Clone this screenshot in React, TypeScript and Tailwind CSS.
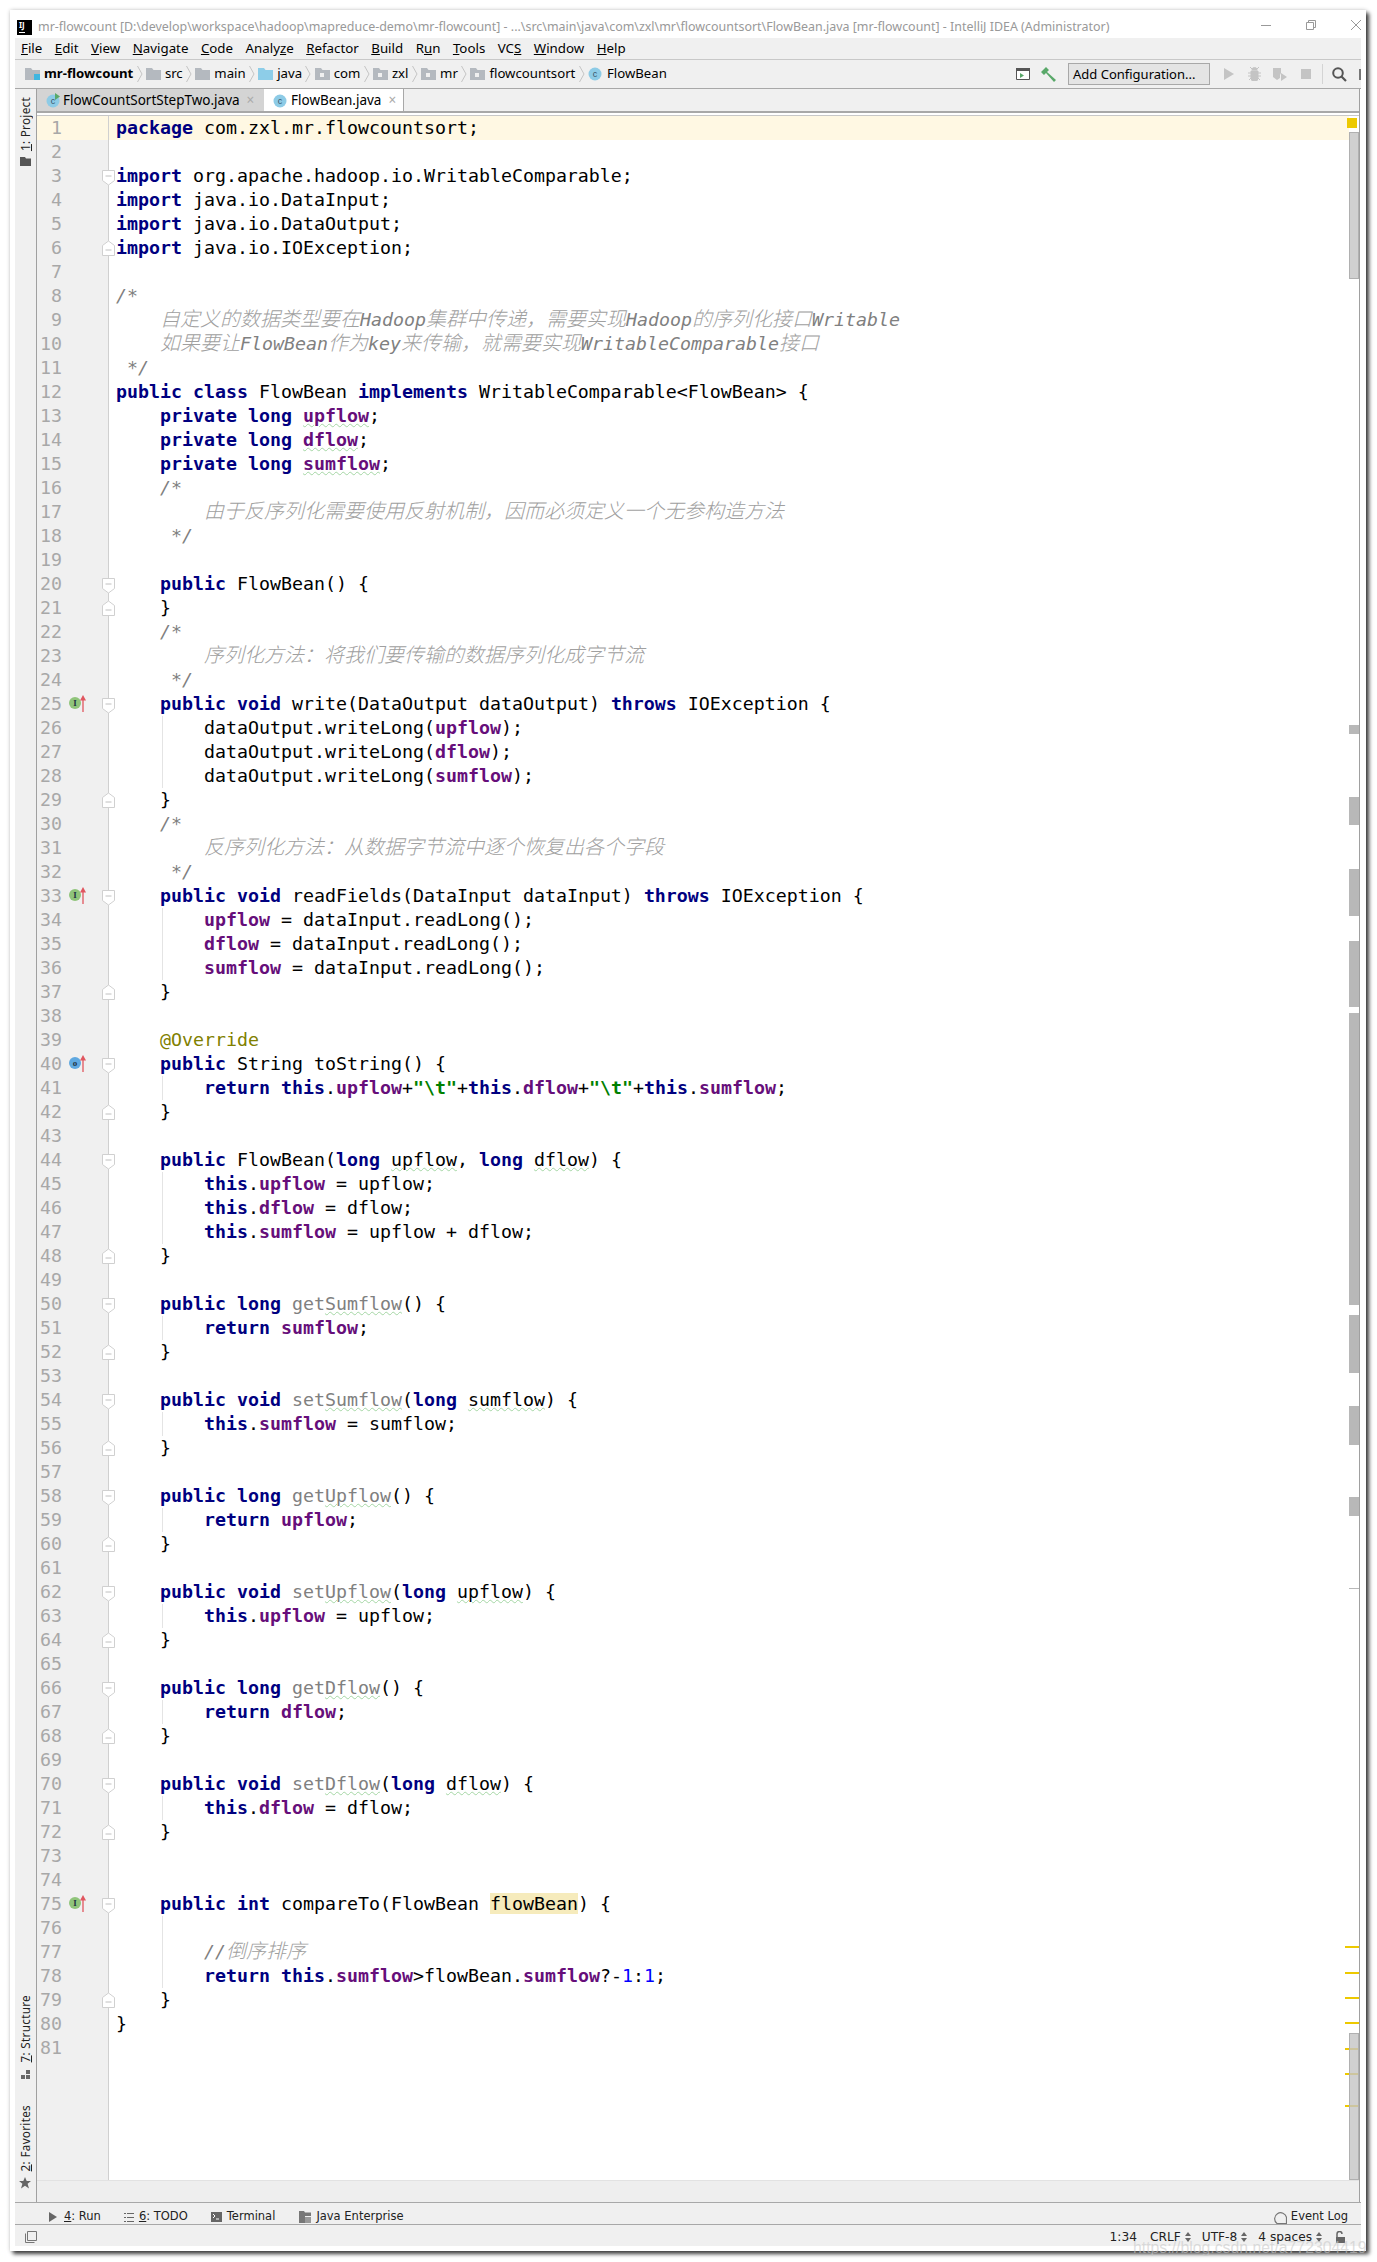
import React from "react";

const CODE: string[] = [
  "{k|package} com.zxl.mr.flowcountsort;",
  "",
  "{k|import} org.apache.hadoop.io.WritableComparable;",
  "{k|import} java.io.DataInput;",
  "{k|import} java.io.DataOutput;",
  "{k|import} java.io.IOException;",
  "",
  "{c|/*}",
  "{c|    }{z|自定义的数据类型要在}{c|Hadoop}{z|集群中传递，需要实现}{c|Hadoop}{z|的序列化接口}{c|Writable}",
  "{c|    }{z|如果要让}{c|FlowBean}{z|作为}{c|key}{z|来传输，就需要实现}{c|WritableComparable}{z|接口}",
  "{c| */}",
  "{k|public class} FlowBean {k|implements} WritableComparable<FlowBean> {",
  "    {k|private long} {F|upflow};",
  "    {k|private long} {F|dflow};",
  "    {k|private long} {F|sumflow};",
  "{c|    /*}",
  "{c|        }{z|由于反序列化需要使用反射机制，因而必须定义一个无参构造方法}",
  "{c|     */}",
  "",
  "    {k|public} FlowBean() {",
  "    }",
  "{c|    /*}",
  "{c|        }{z|序列化方法：将我们要传输的数据序列化成字节流}",
  "{c|     */}",
  "    {k|public void} write(DataOutput dataOutput) {k|throws} IOException {",
  "        dataOutput.writeLong({f|upflow});",
  "        dataOutput.writeLong({f|dflow});",
  "        dataOutput.writeLong({f|sumflow});",
  "    }",
  "{c|    /*}",
  "{c|        }{z|反序列化方法：从数据字节流中逐个恢复出各个字段}",
  "{c|     */}",
  "    {k|public void} readFields(DataInput dataInput) {k|throws} IOException {",
  "        {f|upflow} = dataInput.readLong();",
  "        {f|dflow} = dataInput.readLong();",
  "        {f|sumflow} = dataInput.readLong();",
  "    }",
  "",
  "    {a|@Override}",
  "    {k|public} String toString() {",
  "        {k|return this}.{f|upflow}+{s|\"\\t\"}+{k|this}.{f|dflow}+{s|\"\\t\"}+{k|this}.{f|sumflow};",
  "    }",
  "",
  "    {k|public} FlowBean({k|long} {t|upflow}, {k|long} {t|dflow}) {",
  "        {k|this}.{f|upflow} = upflow;",
  "        {k|this}.{f|dflow} = dflow;",
  "        {k|this}.{f|sumflow} = upflow + dflow;",
  "    }",
  "",
  "    {k|public long} {g|get}{u|Sumflow}() {",
  "        {k|return} {f|sumflow};",
  "    }",
  "",
  "    {k|public void} {g|set}{u|Sumflow}({k|long} {t|sumflow}) {",
  "        {k|this}.{f|sumflow} = sumflow;",
  "    }",
  "",
  "    {k|public long} {g|get}{u|Upflow}() {",
  "        {k|return} {f|upflow};",
  "    }",
  "",
  "    {k|public void} {g|set}{u|Upflow}({k|long} {t|upflow}) {",
  "        {k|this}.{f|upflow} = upflow;",
  "    }",
  "",
  "    {k|public long} {g|get}{u|Dflow}() {",
  "        {k|return} {f|dflow};",
  "    }",
  "",
  "    {k|public void} {g|set}{u|Dflow}({k|long} {t|dflow}) {",
  "        {k|this}.{f|dflow} = dflow;",
  "    }",
  "",
  "",
  "    {k|public int} compareTo(FlowBean {h|flowBean}) {",
  "",
  "{c|        //}{z|倒序排序}",
  "        {k|return this}.{f|sumflow}>flowBean.{f|sumflow}?-{n|1}:{n|1};",
  "    }",
  "}",
  "",
];

const TOKEN: Record<string, string> = {
  k: "font-bold text-[#000080]",
  f: "font-bold text-[#660e7a]",
  F: "font-bold text-[#660e7a] underline decoration-wavy decoration-[#a5d6a5] decoration-1",
  t: "underline decoration-wavy decoration-[#a5d6a5] decoration-1",
  u: "text-[#808080] underline decoration-wavy decoration-[#a5d6a5] decoration-1",
  g: "text-[#808080]",
  c: "italic text-[#808080]",
  z: "italic text-[#a0a0a0] text-[20px] leading-[0] font-['Noto_Sans_CJK_SC',sans-serif] font-light",
  a: "text-[#808000]",
  n: "text-[#0000ff]",
  s: "font-bold text-[#008000]",
  h: "bg-[#f6ebbc]",
};

const FOLD_OPEN = [3, 20, 25, 33, 40, 44, 50, 54, 58, 62, 66, 70, 75];
const FOLD_CLOSE = [6, 21, 29, 37, 42, 48, 52, 56, 60, 64, 68, 72, 79];
const IMPL = [25, 33, 75];
const GUIDE = [26, 27, 28, 34, 35, 36, 41, 45, 46, 47, 51, 55, 59, 63, 67, 71, 76, 77, 78];

// marks on the error stripe, y from top of the editor
const GREY_MARKS = [
  [609, 9], [681, 28], [753, 47], [825, 66], [897, 292], [1199, 58], [1290, 39], [1381, 19], [1472, 1],
];
const YELLOW_MARKS = [1830, 1856, 1881, 1906, 1932, 1957, 1989];

function renderLine(src: string) {
  const parts: React.ReactNode[] = [];
  const re = /\{(\w)\|([^}]*)\}/g;
  let last = 0;
  let m: RegExpExecArray | null;
  while ((m = re.exec(src))) {
    if (m.index > last) parts.push(src.slice(last, m.index));
    parts.push(
      <span key={m.index} className={TOKEN[m[1]]}>
        {m[2]}
      </span>
    );
    last = m.index + m[0].length;
  }
  if (last < src.length) parts.push(src.slice(last));
  return parts;
}

const Folder = ({ color = "#b4b9bf", dot = false, module = false }: { color?: string; dot?: boolean; module?: boolean }) => (
  <svg width="15" height="13" viewBox="0 0 15 13" className="shrink-0">
    <path d="M0 1h6l1.500 2H15v10H0z" fill={color} />
    {dot && <rect x="5" y="6" width="4" height="4" fill="#f0f0f0" />}
    {module && <rect x="9" y="7" width="6" height="6" fill="#40b6e0" />}
  </svg>
);

const ClassIcon = ({ run = false }: { run?: boolean }) => (
  <svg width="15" height="15" viewBox="0 0 15 15" className="shrink-0">
    <circle cx="7" cy="8" r="6.500" fill="#8dcbe6" />
    <text x="7" y="11" textAnchor="middle" fontSize="9" fontFamily="Liberation Sans" fill="#38566a">c</text>
    {run && <path d="M9 0l5 3.500L9 7z" fill="#59a869" />}
  </svg>
);

const Chevron = () => (
  <svg width="6" height="18" viewBox="0 0 6 18" className="shrink-0 mx-[3.3px]">
    <path d="M0.500 1l4.500 8-4.500 8" fill="none" stroke="#c4c4c4" />
  </svg>
);

const FoldMark = ({ open }: { open: boolean }) => (
  <svg
    width="13"
    height="16"
    viewBox="0 0 13 16"
    className={`absolute left-[65px] ${open ? "top-[6px]" : "top-[4px]"}`}
  >
    <path
      d={open ? "M.5.5h12v10l-6 4.500-6-4.500z" : "M.5 15.500h12v-10l-6-4.500-6 4.500z"}
      fill="#fff"
      stroke="#d0d0d0"
    />
    <path d={open ? "M3.500 6h6" : "M3.500 10h6"} stroke="#c0c0c0" />
  </svg>
);

const ImplMark = ({ blue }: { blue: boolean }) => (
  <svg width="19" height="18" viewBox="0 0 19 18" className="absolute left-[32px] top-[2px]">
    <circle cx="6" cy="9" r="6" fill={blue ? "#5fa8e0" : "#8fc47a"} />
    <text x="6" y="12" textAnchor="middle" fontSize="9" fontWeight="bold" fontFamily="Liberation Serif" fill="#234">
      {blue ? "o" : "I"}
    </text>
    <path d="M14 18V3" stroke="#e0565f" strokeWidth="1.300" />
    <path d="M11 6.500L14 1l3 5.500z" fill="#e0565f" />
  </svg>
);

const SideLabel = ({ n, text }: { n: string; text: string }) => (
  <span className="[writing-mode:vertical-rl] rotate-180 text-[11.7px] leading-[21px] tracking-[0.3px]">
    <span className="underline">{n}</span>: {text}
  </span>
);

const NavItem = ({ icon, label, bold }: { icon: React.ReactNode; label: string; bold?: boolean }) => (
  <div className="flex items-center gap-[4px]">
    {icon}
    <span className={bold ? "font-bold" : ""}>{label}</span>
  </div>
);

const MENU: [string, string, string][] = [
  ["", "F", "ile"],
  ["", "E", "dit"],
  ["", "V", "iew"],
  ["", "N", "avigate"],
  ["", "C", "ode"],
  ["Analy", "z", "e"],
  ["", "R", "efactor"],
  ["", "B", "uild"],
  ["R", "u", "n"],
  ["", "T", "ools"],
  ["VC", "S", ""],
  ["", "W", "indow"],
  ["", "H", "elp"],
];

const UpDown = () => (
  <svg width="6" height="10" viewBox="0 0 6 10" className="ml-[4px]">
    <path d="M3 0l3 4H0zM3 10L0 6h6z" fill="#666" />
  </svg>
);

export default function App() {
  return (
    <div className="w-[1377px] h-[2262px] bg-white pl-[10px] pt-[10px] font-['Noto_Sans',sans-serif] text-black overflow-hidden relative">
      <div className="w-[1356px] h-[2241px] bg-white flex flex-col px-[5px] pb-[5px] shadow-[3px_3px_4px_rgba(0,0,0,0.75),0_0_4px_rgba(0,0,0,0.2)]">
        {/* Title bar */}
        <div className="h-[28px] pt-[6px] flex items-center shrink-0">
          <div className="ml-[2px] w-[15px] h-[15px] bg-black relative shrink-0 text-white text-[8px] leading-[9px] font-bold pl-[2px]">
            IJ
            <div className="absolute left-[2px] bottom-[2px] w-[6px] h-[1px] bg-white" />
          </div>
          <span className="ml-[6px] text-[12.45px] text-[#999] whitespace-pre">
            mr-flowcount [D:\develop\workspace\hadoop\mapreduce-demo\mr-flowcount] - ...\src\main\java\com\zxl\mr\flowcountsort\FlowBean.java [mr-flowcount] - IntelliJ IDEA (Administrator)
          </span>
          <div className="ml-auto flex items-center gap-[35px] -mt-[4px]">
            <div className="w-[10px] h-[1px] bg-[#999]" />
            <svg width="10" height="10" viewBox="0 0 10 10">
              <path d="M.5 2.500h7v7h-7zM2.500 2.500v-2h7v7h-2" fill="none" stroke="#999" />
            </svg>
            <svg width="10" height="10" viewBox="0 0 10 10">
              <path d="M0 0l10 10M10 0L0 10" stroke="#999" />
            </svg>
          </div>
        </div>

        {/* Menu */}
        <div className="h-[22px] shrink-0 bg-[#f0f0f0] border-b border-[#c8c8c8] flex items-center pl-[6px] gap-[12.5px] text-[13.3px]">
          {MENU.map(([a, b, c]) => (
            <span key={a + b + c}>
              {a}
              <span className="underline">{b}</span>
              {c}
            </span>
          ))}
        </div>

        {/* Navigation bar */}
        <div className="h-[29px] shrink-0 bg-[#f0f0f0] border-b border-[#a8a8a8] flex items-center pl-[10px] text-[13.2px]">
          <NavItem icon={<Folder module />} label="mr-flowcount" bold />
          <Chevron />
          <NavItem icon={<Folder />} label="src" />
          <Chevron />
          <NavItem icon={<Folder />} label="main" />
          <Chevron />
          <NavItem icon={<Folder color="#8dcde8" />} label="java" />
          <Chevron />
          <NavItem icon={<Folder dot />} label="com" />
          <Chevron />
          <NavItem icon={<Folder dot />} label="zxl" />
          <Chevron />
          <NavItem icon={<Folder dot />} label="mr" />
          <Chevron />
          <NavItem icon={<Folder dot />} label="flowcountsort" />
          <Chevron />
          <NavItem icon={<ClassIcon />} label="FlowBean" />

          <div className="ml-auto flex items-center">
            <svg width="14" height="12" viewBox="0 0 14 12" className="mr-[11px]">
              <path d="M.5.500h13v11H.5z" fill="#fff" stroke="#555" />
              <path d="M0 0h14v3H0z" fill="#555" />
              <path d="M4 5l4 2.500L4 10z" fill="#59a869" />
            </svg>
            <svg width="15" height="15" viewBox="0 0 15 15" className="mr-[12px]">
              <path d="M0 5l5-5 3 3-2 2 9 8-2 2-8-9-2 2z" fill="#59a869" />
            </svg>
            <div className="w-[142px] h-[22px] bg-[#e4e4e4] border border-[#a8a8a8] pl-[4px] text-[13px] leading-[20px]">
              Add Configuration...
            </div>
            <svg width="10" height="12" viewBox="0 0 10 12" className="ml-[14px]">
              <path d="M0 0l10 6-10 6z" fill="#c4c4c4" />
            </svg>
            <svg width="13" height="14" viewBox="0 0 13 14" className="ml-[14px]">
              <path d="M3 4h7v7a3.500 3.500 0 0 1-7 0zM4 3a2.500 2.500 0 0 1 5 0zM0 6h13M0 9h13M1 13l2-2M12 13l-2-2M2 0l2 2M11 0L9 2" fill="#c4c4c4" stroke="#c4c4c4" />
            </svg>
            <svg width="14" height="14" viewBox="0 0 14 14" className="ml-[12px]">
              <path d="M0 1h8v5l-1 2v3l-3 2-4-3z" fill="#c4c4c4" />
              <path d="M8 6l6 4-6 4z" fill="#c4c4c4" />
            </svg>
            <div className="ml-[14px] w-[10px] h-[10px] bg-[#c4c4c4]" />
            <div className="ml-[11px] w-[1px] h-[20px] bg-[#d4d4d4]" />
            <svg width="15" height="15" viewBox="0 0 15 15" className="ml-[9px]">
              <circle cx="6" cy="6" r="4.800" fill="none" stroke="#555" strokeWidth="2" />
              <path d="M9.500 9.500L14 14" stroke="#555" strokeWidth="2.200" />
            </svg>
            <div className="ml-[12px] w-[2px] h-[11px] bg-[#777]" />
          </div>
        </div>

        {/* Middle */}
        <div className="flex-1 min-h-0 flex border-b border-[#a8a8a8]">
          <div className="w-[22px] shrink-0 bg-[#f0f0f0] border-r border-[#a0a0a0] flex flex-col justify-between items-center pt-[8px] pb-[13px] text-[#222]">
            <div className="flex flex-col items-center gap-[6px] -ml-[1px]">
              <SideLabel n="1" text="Project" />
              <svg width="11" height="9" viewBox="0 0 11 9">
                <path d="M0 0h5l1 1.500h5V9H0z" fill="#555" />
              </svg>
            </div>
            <div className="flex flex-col items-center -ml-[1px]">
              <SideLabel n="7" text="Structure" />
              <svg width="9" height="9" viewBox="0 0 9 9" className="mt-[7px] mb-[26px]">
                <path d="M5 0h4v4H5zM0 5h4v4H0zM5 5h4v4H5z" fill="#666" />
              </svg>
              <SideLabel n="2" text="Favorites" />
              <svg width="12" height="12" viewBox="0 0 12 12" className="mt-[6px]">
                <path d="M6 0l1.700 4H12L8.600 6.800 10 11.500 6 8.800 2 11.500l1.400-4.700L0 4h4.300z" fill="#666" />
              </svg>
            </div>
          </div>

          <div className="flex-1 min-w-0 flex flex-col border-r border-[#a0a0a0] mr-[1px]">
            {/* Tabs */}
            <div className="h-[24px] shrink-0 bg-[#f0f0f0] border-b-2 border-[#a8a8a8] flex text-[13.5px]">
              <div className="w-[227px] h-[22px] bg-[#d4d4d4] flex items-center pl-[9px] gap-[2px]">
                <ClassIcon run />
                <span>FlowCountSortStepTwo.java</span>
                <span className="ml-[5px] text-[#aaa]">×</span>
              </div>
              <div className="w-[140px] h-[22px] bg-white border-r border-[#a8a8a8] flex items-center pl-[9px] gap-[3px]">
                <ClassIcon />
                <span>FlowBean.java</span>
                <span className="ml-[4px] text-[#aaa]">×</span>
              </div>
            </div>
            <div className="h-[3px] shrink-0 bg-white border-b border-[#c8c8c8]" />

            {/* Editor */}
            <div className="relative h-[2064px] shrink-0 flex font-['DejaVu_Sans_Mono',monospace] text-[18.27px] leading-[24px]">
              <div className="w-[72px] shrink-0 bg-[#f0f0f0] border-r border-[#d0d0d0] text-[#a8a8a8]">
                {CODE.map((_, i) => (
                  <div key={i} className={`h-[24px] relative ${i === 0 ? "bg-[#fff8e3]" : ""}`}>
                    <div className="w-[25px] text-right">{i + 1}</div>
                    {IMPL.includes(i + 1) && <ImplMark blue={false} />}
                    {i + 1 === 40 && <ImplMark blue />}
                    {FOLD_OPEN.includes(i + 1) && <FoldMark open />}
                    {FOLD_CLOSE.includes(i + 1) && <FoldMark open={false} />}
                  </div>
                ))}
              </div>
              <div className="flex-1 min-w-0 pl-[7px]">
                {CODE.map((src, i) => (
                  <div key={i} className={`h-[24px] whitespace-pre relative -ml-[7px] pl-[7px] ${i === 0 ? "bg-[#fff8e3] mr-[10px]" : ""}`}>
                    {GUIDE.includes(i + 1) && (
                      <div className="absolute left-[53px] top-0 bottom-0 w-[1px] bg-[#e4e4e4]" />
                    )}
                    {renderLine(src)}
                  </div>
                ))}
              </div>

              {/* Error stripe */}
              {GREY_MARKS.map(([top, h]) => (
                <div
                  key={top}
                  className="absolute right-0 w-[10px] bg-[#b8b8b8]"
                  style={{ top, height: h }}
                />
              ))}
              {YELLOW_MARKS.map((top) => (
                <div key={top} className="absolute right-0 w-[14px] h-[2px] bg-[#edc900]" style={{ top }} />
              ))}
              <div className="absolute right-[2px] top-[2px] w-[10px] h-[10px] bg-[#edc900]" />
              <div className="absolute right-0 top-[16px] w-[10px] h-[147px] bg-[#c4c4c4]/80 border border-[#b0b0b0]" />
              <div className="absolute right-0 top-[1917px] w-[10px] h-[147px] bg-[#c4c4c4]/80 border border-[#b0b0b0]" />
            </div>

            <div className="flex-1 bg-[#eeeeee] border-t border-[#e2e2e2]" />
          </div>
        </div>

        {/* Tool buttons */}
        <div className="h-[22px] shrink-0 pt-[7px] bg-[#f0f0f0] border-b border-[#a8a8a8] flex items-center text-[11.5px] text-[#222] font-['DejaVu_Sans',sans-serif] pr-[13px]">
          <svg width="8" height="10" viewBox="0 0 8 10" className="ml-[34px]">
            <path d="M0 0l8 5-8 5z" fill="#666" />
          </svg>
          <span className="ml-[7px]">
            <span className="underline">4</span>: Run
          </span>
          <svg width="10" height="9" viewBox="0 0 10 9" className="ml-[23px]">
            <path d="M0 .5h2M3 .5h7M0 4.500h2M3 4.500h7M0 8.500h2M3 8.500h7" stroke="#666" />
          </svg>
          <span className="ml-[5px]">
            <span className="underline">6</span>: TODO
          </span>
          <svg width="11" height="10" viewBox="0 0 11 10" className="ml-[23px]">
            <path d="M0 0h11v10H0z" fill="#666" />
            <path d="M2 2l2 2-2 2M5 7h3" stroke="#fff" fill="none" />
          </svg>
          <span className="ml-[5px]">Terminal</span>
          <svg width="12" height="12" viewBox="0 0 12 12" className="ml-[24px]">
            <path d="M0 0h5l1 1.500h6V5H6v7H0z" fill="#777" />
            <path d="M6 6h6v6H6z" fill="#999" />
          </svg>
          <span className="ml-[5px]">Java Enterprise</span>
          <div className="ml-auto flex items-center gap-[4px]">
            <svg width="13" height="13" viewBox="0 0 13 13">
              <path d="M3 12.500h9.500V6.500a6 6 0 1 0-9.500 6z" fill="none" stroke="#777" strokeWidth="1.200" />
            </svg>
            <span>Event Log</span>
          </div>
        </div>

        {/* Status bar */}
        <div className="h-[21px] shrink-0 pt-[3px] bg-[#f0f0f0] flex items-center text-[12.2px] text-[#222] font-['DejaVu_Sans',sans-serif]">
          <svg width="12" height="12" viewBox="0 0 12 12" className="ml-[10px]">
            <path d="M.5 2.500v9h9M2.500 .5h9v9h-9z" fill="none" stroke="#777" />
          </svg>
          <div className="ml-auto flex items-center pr-[16px]">
            <span>1:34</span>
            <span className="ml-[13px]">CRLF</span>
            <UpDown />
            <span className="ml-[11px]">UTF-8</span>
            <UpDown />
            <span className="ml-[11px]">4 spaces</span>
            <UpDown />
            <svg width="11" height="12" viewBox="0 0 11 12" className="ml-[12px]">
              <path d="M3 6V3a2.500 2.500 0 0 1 5 0" fill="none" stroke="#666" strokeWidth="1.500" />
              <path d="M2 6h9v6H2z" fill="#666" />
            </svg>
          </div>
        </div>
      </div>

      {/* CSDN watermark */}
      <span className="absolute left-[1133px] top-[2236px] text-[15.8px] text-[#c8c8c8]/60 font-['Liberation_Sans',sans-serif] whitespace-pre">
        https://blog.csdn.net/a772304419
      </span>
    </div>
  );
}
